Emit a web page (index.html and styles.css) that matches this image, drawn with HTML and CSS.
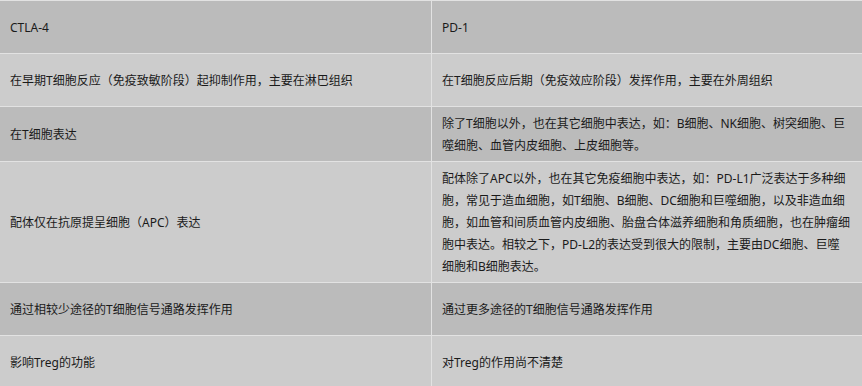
FILE: index.html
```html
<!DOCTYPE html>
<html lang="zh-CN">
<head>
<meta charset="utf-8">
<title>CTLA-4 vs PD-1</title>
<link rel="stylesheet" href="styles.css">
</head>
<body>
<div class="table">
  <div class="cell dark">CTLA-4</div>
  <div class="cell dark">PD-1</div>

  <div class="cell light">在早期T细胞反应（免疫致敏阶段）起抑制作用，主要在淋巴组织</div>
  <div class="cell light">在T细胞反应后期（免疫效应阶段）发挥作用，主要在外周组织</div>

  <div class="cell dark">在T细胞表达</div>
  <div class="cell dark">除了T细胞以外，也在其它细胞中表达，如：B细胞、NK细胞、树突细胞、巨噬细胞、血管内皮细胞、上皮细胞等。</div>

  <div class="cell light">配体仅在抗原提呈细胞（APC）表达</div>
  <div class="cell light">配体除了APC以外，也在其它免疫细胞中表达，如：PD-L1广泛表达于多种细胞，常见于造血细胞，如T细胞、B细胞、DC细胞和巨噬细胞，以及非造血细胞，如血管和间质血管内皮细胞、胎盘合体滋养细胞和角质细胞，也在肿瘤细胞中表达。相较之下，PD-L2的表达受到很大的限制，主要由DC细胞、巨噬细胞和B细胞表达。</div>

  <div class="cell dark">通过相较少途径的T细胞信号通路发挥作用</div>
  <div class="cell dark">通过更多途径的T细胞信号通路发挥作用</div>

  <div class="cell light">影响Treg的功能</div>
  <div class="cell light">对Treg的作用尚不清楚</div>
</div>
</body>
</html>
```

FILE: styles.css
```css
html, body {
  margin: 0;
  padding: 0;
  background: #cccccc;
}

body {
  font-family: "Microsoft YaHei", "Noto Sans", "Noto Sans CJK SC", sans-serif;
  font-size: 12px;
  color: #1a1a1a;
}

.table {
  display: grid;
  grid-template-columns: 431px 430px;
  column-gap: 1px;
  row-gap: 1px;
  padding-top: 1px;
  background: #e2e2e2;
  width: 862px;
}

.cell {
  display: flex;
  align-items: center;
  box-sizing: border-box;
  min-height: 52px;
  padding: 6px 12px 4px 10px;
  line-height: 22px;
}

.dark {
  background: #bbbbbb;
}

.light {
  background: #cccccc;
}
```
